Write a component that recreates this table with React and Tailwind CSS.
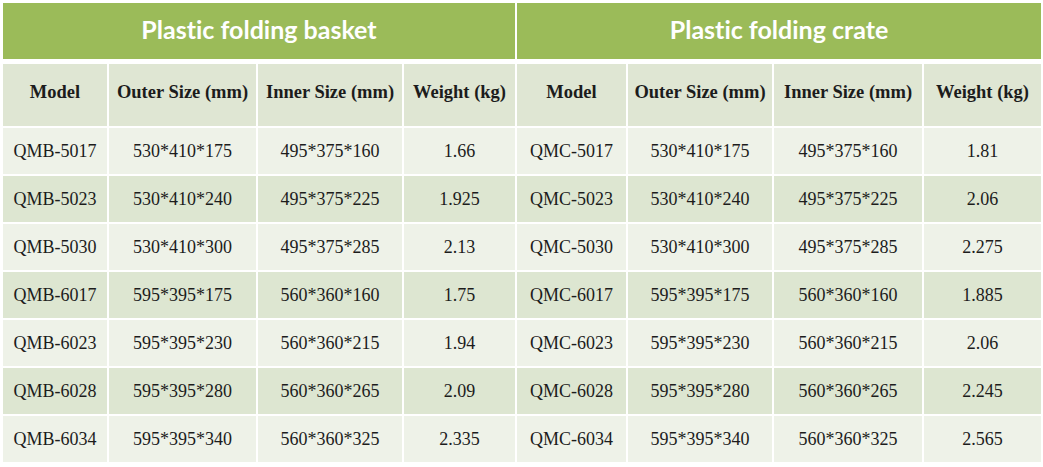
import React from 'react'

const cols = 'grid grid-cols-[104px_147px_144px_111px_109px_144px_148px_117px] gap-x-[2px]'

const heads = ['Model', 'Outer Size (mm)', 'Inner Size (mm)', 'Weight (kg)']

const rows = [
  ['QMB-5017', '530*410*175', '495*375*160', '1.66', 'QMC-5017', '530*410*175', '495*375*160', '1.81'],
  ['QMB-5023', '530*410*240', '495*375*225', '1.925', 'QMC-5023', '530*410*240', '495*375*225', '2.06'],
  ['QMB-5030', '530*410*300', '495*375*285', '2.13', 'QMC-5030', '530*410*300', '495*375*285', '2.275'],
  ['QMB-6017', '595*395*175', '560*360*160', '1.75', 'QMC-6017', '595*395*175', '560*360*160', '1.885'],
  ['QMB-6023', '595*395*230', '560*360*215', '1.94', 'QMC-6023', '595*395*230', '560*360*215', '2.06'],
  ['QMB-6028', '595*395*280', '560*360*265', '2.09', 'QMC-6028', '595*395*280', '560*360*265', '2.245'],
  ['QMB-6034', '595*395*340', '560*360*325', '2.335', 'QMC-6034', '595*395*340', '560*360*325', '2.565'],
]

const title = "col-span-4 h-[56px] bg-[#9bbb59] flex items-center justify-center text-white font-['Lato',sans-serif] font-bold text-[25px] pb-[2px] [font-variant-ligatures:none] [font-feature-settings:'liga'_0,'clig'_0,'dlig'_0]"

export default function App() {
  return (
    <div className="w-[1043px] h-[467px] bg-white pt-[3px] pl-[3px] font-['Liberation_Serif',serif] text-[#1c1c1c]">
      <div className={cols}>
        <div className={title}>Plastic folding basket</div>
        <div className={title}>Plastic folding crate</div>
      </div>
      <div className={cols + ' mt-[5px]'}>
        {[...heads, ...heads].map((h, i) => (
          <div key={i} className="h-[62px] bg-[#dfe6d3] flex items-center justify-center font-bold text-[18.5px] pb-[5px]">
            {h}
          </div>
        ))}
      </div>
      {rows.map((r, ri) => (
        <div key={ri} className={cols + ' mt-[2px]'}>
          {r.map((c, ci) => (
            <div key={ci} className={(ri % 2 === 0 ? 'bg-[#eef2e8]' : 'bg-[#dde6d1]') + ' h-[46px] flex items-center justify-center text-[18px]'}>
              {c}
            </div>
          ))}
        </div>
      ))}
    </div>
  )
}
